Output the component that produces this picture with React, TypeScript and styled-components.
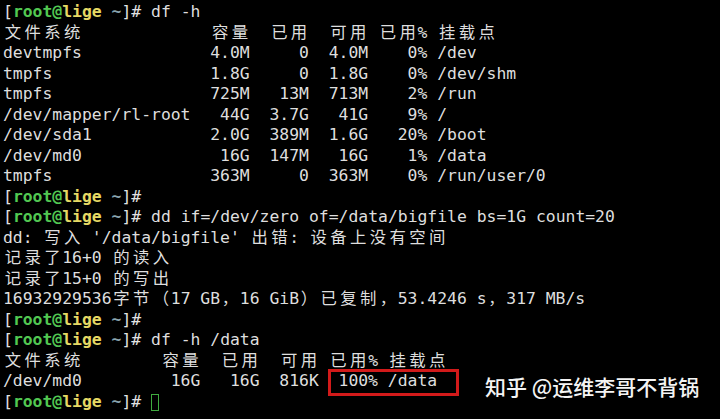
import React from 'react';
import styled, { createGlobalStyle } from 'styled-components';

const Global = createGlobalStyle`
  html, body { margin: 0; padding: 0; background: #000; }
`;

const Terminal = styled.div`
  position: relative;
  width: 720px;
  height: 419px;
  overflow: hidden;
  box-sizing: border-box;
  padding: 2px 3px 0;
  background: #000;
  font-family: "DejaVu Sans Mono", "Liberation Mono", monospace;
  font-size: 16.4px;
  line-height: 20.5px;
  color: #dedede;
`;

const Line = styled.div`
  white-space: pre;
  height: 20.5px;
`;

const Wide = styled.span`
  display: inline-block;
  width: 1.2042em;
  height: 20.5px;
  text-align: center;
  vertical-align: top;
  font-family: "Noto Sans CJK SC", sans-serif;
  line-height: 17.5px;
`;

const Bracket = styled.span`
  color: #e2e2e2;
`;
const User = styled.span`
  color: #52c852;
  font-weight: bold;
`;
const Host = styled.span`
  color: #e6d964;
  font-weight: bold;
`;
const Tilde = styled.span`
  color: #8aa3ad;
  font-weight: bold;
`;

const Cursor = styled.span`
  display: inline-block;
  width: 8px;
  height: 17px;
  box-sizing: border-box;
  border: 1px solid #3faa3f;
  vertical-align: -4px;
`;

const RedBox = styled.div`
  position: absolute;
  left: 328px;
  top: 369px;
  width: 131px;
  height: 27px;
  box-sizing: border-box;
  border: 3px solid #d21a1a;
`;

const Watermark = styled.div`
  position: absolute;
  left: 485px;
  top: 375px;
  font-family: "Noto Sans CJK SC", sans-serif;
  font-size: 21px;
  line-height: 22px;
  font-weight: 500;
  color: #f4f4f4;
  white-space: pre;
`;

const wideRe = /[\u1100-\u115f\u2e80-\ua4cf\uac00-\ud7a3\uf900-\ufaff\ufe30-\ufe4f\uff00-\uff60\uffe0-\uffe6]/;

function Txt({ s }: { s: string }) {
  const parts: React.ReactNode[] = [];
  let buf = '';
  let k = 0;
  for (const c of s) {
    if (wideRe.test(c)) {
      if (buf) {
        parts.push(buf);
        buf = '';
      }
      parts.push(<Wide key={k++}>{c}</Wide>);
    } else {
      buf += c;
    }
  }
  if (buf) parts.push(buf);
  return <>{parts}</>;
}

function Prompt() {
  return (
    <>
      <Bracket>[</Bracket>
      <User>root@</User>
      <Host>lige</Host>
      <Tilde> ~</Tilde>
      <Bracket>]# </Bracket>
    </>
  );
}

const row1 = (fs: string, s: string, u: string, a: string, p: string, m: string) =>
  fs.padEnd(21) + s.padStart(4) + u.padStart(6) + a.padStart(6) + p.padStart(6) + ' ' + m;

const dfRows: string[] = [
  '文件系统' + ' '.repeat(13) + '容量  已用  可用 已用% 挂载点',
  row1('devtmpfs', '4.0M', '0', '4.0M', '0%', '/dev'),
  row1('tmpfs', '1.8G', '0', '1.8G', '0%', '/dev/shm'),
  row1('tmpfs', '725M', '13M', '713M', '2%', '/run'),
  row1('/dev/mapper/rl-root', '44G', '3.7G', '41G', '9%', '/'),
  row1('/dev/sda1', '2.0G', '389M', '1.6G', '20%', '/boot'),
  row1('/dev/md0', '16G', '147M', '16G', '1%', '/data'),
  row1('tmpfs', '363M', '0', '363M', '0%', '/run/user/0'),
];

const ddOut: string[] = [
  "dd: 写入 '/data/bigfile' 出错: 设备上没有空间",
  '记录了16+0 的读入',
  '记录了15+0 的写出',
  '16932929536字节（17 GB，16 GiB）已复制，53.4246 s，317 MB/s',
];

const header2 = '文件系统' + ' '.repeat(8) + '容量  已用  可用 已用% 挂载点';
const row2 = '/dev/md0'.padEnd(16) + '16G'.padStart(4) + '16G'.padStart(6) + '816K'.padStart(6) + '  100% /data';

export default function App() {
  return (
    <>
      <Global />
      <Terminal>
        <Line>
          <Prompt />
          df -h
        </Line>
        {dfRows.map((r, i) => (
          <Line key={'a' + i}>
            <Txt s={r} />
          </Line>
        ))}
        <Line>
          <Prompt />
        </Line>
        <Line>
          <Prompt />
          dd if=/dev/zero of=/data/bigfile bs=1G count=20
        </Line>
        {ddOut.map((r, i) => (
          <Line key={'b' + i}>
            <Txt s={r} />
          </Line>
        ))}
        <Line>
          <Prompt />
        </Line>
        <Line>
          <Prompt />
          df -h /data
        </Line>
        <Line>
          <Txt s={header2} />
        </Line>
        <Line>{row2}</Line>
        <Line>
          <Prompt />
          <Cursor />
        </Line>
        <RedBox />
        <Watermark>知乎 @运维李哥不背锅</Watermark>
      </Terminal>
    </>
  );
}
